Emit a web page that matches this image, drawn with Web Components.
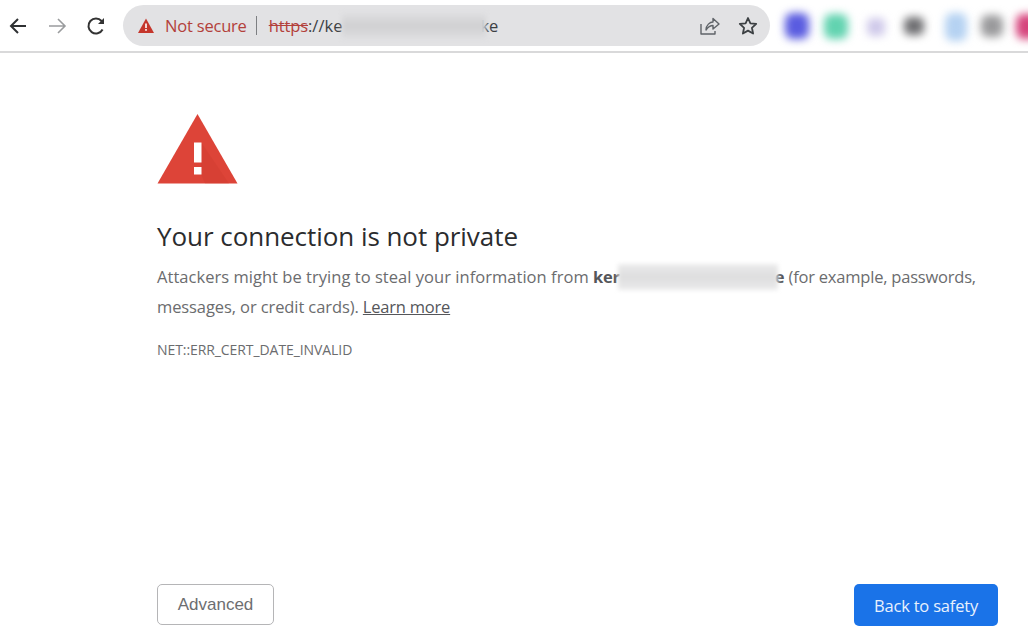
<!DOCTYPE html>
<html>
<head>
<meta charset="utf-8">
<style>
  html, body { margin: 0; height: 100%; background: #fff; overflow: hidden; }
  body { font-family: "Open Sans", "Noto Sans", sans-serif; }
</style>
</head>
<body>
<error-app></error-app>
<script>
class ToolButton extends HTMLElement {
  constructor() {
    super();
    this.attachShadow({ mode: 'open' }).innerHTML = `
      <style>
        :host { display: flex; width: 24px; height: 24px; align-items: center; justify-content: center; }
        svg { width: 24px; height: 24px; fill: none; stroke: var(--c, #333); stroke-width: 2; }
      </style>
      <svg viewBox="0 0 24 24">${this.icon()}</svg>`;
  }
  icon() {
    const kind = this.getAttribute('kind');
    if (kind === 'back') return '<path d="M20 12H5M12 5l-7 7 7 7"/>';
    if (kind === 'forward') return '<path d="M4 12h16M13 5l7 7-7 7" stroke-width="1.6"/>';
    if (kind === 'reload') return '<path d="M18.600 15.500A7.500 7.500 0 1 1 17.600 7L19 8.500"/><path d="M20 4v6h-6" fill="#333" stroke="none"/>';
    if (kind === 'share') return '<path d="M4 10v10h14v-3M9 16c0-5 4-8 7-8V4.500l6 5.500-6 5v-3.500c-3 0-5 1.500-7 4.500z" stroke-width="1.4" stroke-linejoin="round"/>';
    if (kind === 'star') return '<path d="M12 4l2.400 5.300 5.800.6-4.300 3.900 1.200 5.700L12 16.600l-5.100 2.900 1.200-5.700-4.300-3.900 5.800-.6z" stroke-width="1.800" stroke-linejoin="round"/>';
    return '';
  }
}
customElements.define('tool-button', ToolButton);

class AddressBar extends HTMLElement {
  constructor() {
    super();
    this.attachShadow({ mode: 'open' }).innerHTML = `
      <style>
        :host { display: flex; flex: none; align-items: center; width: 647px; height: 41px; box-sizing: border-box;
          background: #e2e2e4; border-radius: 21px; padding: 0 10px 0 15px; font-size: 16.500px; color: #3c4043; }
        .warn { width: 16px; height: 15px; flex: none; }
        .label { color: #b3403a; margin-left: 11px; letter-spacing: -.2px; }
        .sep { width: 1px; height: 19px; background: #7d7f82; margin: 0 12px 0 9px; flex: none; }
        .scheme { color: #b3403a; text-decoration: line-through; letter-spacing: -.1px; }
        .blur { width: 144px; height: 26px; flex: none; margin-right: -6px;
          background: linear-gradient(#dedee0, #d0d0d2 50%, #dedee0); filter: blur(2px); }
        .end { flex: 1; }
        .tools { display: flex; gap: 15px; align-items: center; }
      </style>
      <svg class="warn" viewBox="0 0 16 15"><path d="M8 0.500L16 15H0z" fill="#c5362c"/><rect x="7.200" y="5.500" width="1.600" height="4.500" fill="#fff"/><rect x="7.200" y="11" width="1.600" height="1.800" fill="#fff"/></svg>
      <span class="label">Not secure</span>
      <span class="sep"></span>
      <span class="scheme">https</span><span>://ke</span><span class="blur"></span><span>ke</span>
      <span class="end"></span>
      <span class="tools">
        <tool-button kind="share" style="--c:#5f6368"></tool-button>
        <tool-button kind="star" style="--c:#3c4043"></tool-button>
      </span>`;
  }
}
customElements.define('address-bar', AddressBar);

class BrowserBar extends HTMLElement {
  constructor() {
    super();
    // colour, width, height, gap before, vertical nudge
    const dots = [
      ['#5a5ce0', 24, 26, 15, 0], ['#62d3b0', 24, 25, 15, 1], ['#cfc9ea', 18, 18, 19, 2], ['#6f6f72', 20, 18, 19, 1],
      ['#b5d2f2', 22, 28, 21, 2], ['#9a9a9c', 22, 22, 14, 1], ['#d6447c', 22, 25, 13, 1]
    ].map(d => `<i style="background:${d[0]};width:${d[1]}px;height:${d[2]}px;margin-left:${d[3]}px;margin-top:${d[4]}px"></i>`).join('');
    this.attachShadow({ mode: 'open' }).innerHTML = `
      <style>
        :host { display: flex; align-items: center; height: 51px; border-bottom: 2px solid #d9d9da;
          padding-left: 6px; overflow: hidden; }
        .nav { display: flex; flex: none; gap: 15px; margin-right: 15px; }
        .dots { display: flex; align-items: center; flex: none; }
        .dots i { display: block; flex: none; border-radius: 30%; filter: blur(4px); }
      </style>
      <div class="nav">
        <tool-button kind="back" style="--c:#2f3133"></tool-button>
        <tool-button kind="forward" style="--c:#9a9c9e"></tool-button>
        <tool-button kind="reload" style="--c:#333"></tool-button>
      </div>
      <address-bar></address-bar>
      <div class="dots">${dots}</div>`;
  }
}
customElements.define('browser-bar', BrowserBar);

class WarningIcon extends HTMLElement {
  constructor() {
    super();
    this.attachShadow({ mode: 'open' }).innerHTML = `
      <style>
        :host { display: block; width: 81px; height: 71px; }
        svg { display: block; }
      </style>
      <svg width="81" height="71" viewBox="0 0 81 71">
        <path d="M40.500 0L80.500 69.500H0.500z" fill="#dd4438"/>
        <path d="M44 28l28 41.500H48L44 60z" fill="#c9372c" opacity=".3"/>
        <rect x="37" y="28.500" width="7.500" height="20" fill="#fff"/>
        <rect x="37" y="53" width="7.500" height="7.500" fill="#fff"/>
      </svg>`;
  }
}
customElements.define('warning-icon', WarningIcon);

class PageButton extends HTMLElement {
  constructor() {
    super();
    this.attachShadow({ mode: 'open' }).innerHTML = `
      <style>
        :host { display: flex; align-items: center; justify-content: center; box-sizing: border-box; border-radius: 5px; }
        :host([kind=plain]) { width: 117px; height: 41px; border: 1px solid #b5b5b7; color: #6d6e71;
          font: 17px "Liberation Sans", sans-serif; background: #fff; }
        :host([kind=primary]) { width: 144px; height: 42px; background: #1a73e8; color: #e8f1fd; font-size: 16.500px; letter-spacing: -.2px; }
      </style>
      <slot></slot>`;
  }
}
customElements.define('page-button', PageButton);

class ErrorPanel extends HTMLElement {
  constructor() {
    super();
    this.attachShadow({ mode: 'open' }).innerHTML = `
      <style>
        :host { display: flex; flex-direction: column; flex: 1; padding: 61px 30px 4px 157px; min-height: 0; color: #6b6c6e; }
        h1 { margin: 33px 0 0; font-size: 26px; line-height: 36px; font-weight: 400; color: #2b2c2e; letter-spacing: -.05px; }
        p { margin: 8px 0 0; font-size: 16.500px; line-height: 30px; letter-spacing: -.21px; width: 850px; }
        .a { letter-spacing: .035px; }
        .c { letter-spacing: -.1px; }
        b { color: #55565a; font-weight: 700; }
        .blur { display: inline-block; width: 160px; height: 26px;
          background: linear-gradient(#ebebec, #dedede 50%, #ebebec); filter: blur(2px);
          vertical-align: -7px; margin: 0 -3px 0 -2px; }
        a { color: #55565a; text-decoration: underline; }
        .code { margin-top: 19px; font-size: 14px; line-height: 18px; letter-spacing: -.08px; }
        .spacer { flex: 1; }
        .row { display: flex; justify-content: space-between; align-items: flex-start; }
      </style>
      <warning-icon></warning-icon>
      <h1>Your connection is not private</h1>
      <p><span class="a">Attackers might be trying to steal your information from </span><b>ker</b><span class="blur"></span><b>e</b> (for example, passwords,<br><span class="c">messages, or credit cards). </span><a href="#">Learn more</a></p>
      <div class="code">NET::ERR_CERT_DATE_INVALID</div>
      <div class="spacer"></div>
      <div class="row">
        <page-button kind="plain">Advanced</page-button>
        <page-button kind="primary">Back to safety</page-button>
      </div>`;
  }
}
customElements.define('error-panel', ErrorPanel);

class ErrorApp extends HTMLElement {
  constructor() {
    super();
    this.attachShadow({ mode: 'open' }).innerHTML = `
      <style>
        :host { display: flex; flex-direction: column; height: 630px; }
      </style>
      <browser-bar></browser-bar>
      <error-panel></error-panel>`;
  }
}
customElements.define('error-app', ErrorApp);
</script>
</body>
</html>
